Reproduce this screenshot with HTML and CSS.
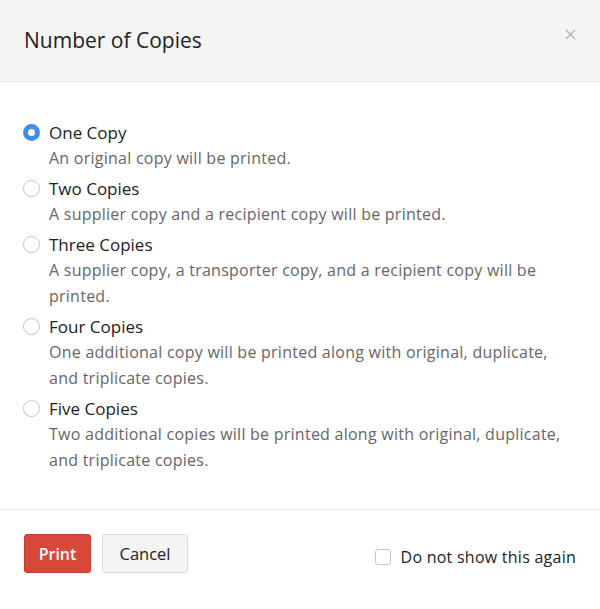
FILE: index.html
```html
<!DOCTYPE html>
<html lang="en">
<head>
<meta charset="utf-8">
<title>Number of Copies</title>
<link rel="stylesheet" href="styles.css">
</head>
<body>
<div class="modal">
  <div class="modal-header">
    <h2 class="modal-title">Number of Copies</h2>
    <button class="close" type="button" aria-label="Close">
      <svg width="11" height="11" viewBox="0 0 11 11"><path d="M1 1L10 10M10 1L1 10" stroke="#b4b4b4" stroke-width="1.4" fill="none"/></svg>
    </button>
  </div>
  <div class="modal-body">
    <label class="option">
      <span class="radio checked"></span>
      <span class="option-text">
        <span class="option-label">One Copy</span>
        <span class="option-desc">An original copy will be printed.</span>
      </span>
    </label>
    <label class="option">
      <span class="radio"></span>
      <span class="option-text">
        <span class="option-label">Two Copies</span>
        <span class="option-desc">A supplier copy and a recipient copy will be printed.</span>
      </span>
    </label>
    <label class="option">
      <span class="radio"></span>
      <span class="option-text">
        <span class="option-label">Three Copies</span>
        <span class="option-desc">A supplier copy, a transporter copy, and a recipient copy will be printed.</span>
      </span>
    </label>
    <label class="option">
      <span class="radio"></span>
      <span class="option-text">
        <span class="option-label">Four Copies</span>
        <span class="option-desc">One additional copy will be printed along with original, duplicate, and triplicate copies.</span>
      </span>
    </label>
    <label class="option">
      <span class="radio"></span>
      <span class="option-text">
        <span class="option-label">Five Copies</span>
        <span class="option-desc">Two additional copies will be printed along with original, duplicate, and triplicate copies.</span>
      </span>
    </label>
  </div>
  <div class="modal-footer">
    <div class="buttons">
      <button class="btn btn-primary" type="button">Print</button>
      <button class="btn btn-default" type="button">Cancel</button>
    </div>
    <label class="check">
      <span class="checkbox"></span>
      <span class="check-label">Do not show this again</span>
    </label>
  </div>
</div>
</body>
</html>
```
FILE: styles.css
```css
* { box-sizing: border-box; }
html, body { margin: 0; padding: 0; background: #fff; }
body {
  font-family: "Open Sans", "Liberation Sans", sans-serif;
  color: #212121;
  width: 600px;
  height: 609px;
  overflow: hidden;
}
.modal { display: flex; flex-direction: column; height: 609px; }
.modal-header {
  height: 82px;
  background: #f4f4f4;
  border-bottom: 1px solid #e6e6e6;
  display: flex;
  align-items: center;
  justify-content: space-between;
  padding: 0 24px 2px 24px;
}
.modal-title {
  margin: 0;
  font-size: 21px;
  font-weight: 400;
  color: #222;
}
.close {
  border: 0;
  background: transparent;
  padding: 0;
  margin-top: -10px;
  width: 11px;
  height: 11px;
  display: flex;
}
.modal-body {
  padding: 39px 34px 0 23px;
  height: 428px;
  border-bottom: 1px solid #e8e8e8;
}
.option {
  display: flex;
  align-items: flex-start;
  gap: 9px;
  margin-bottom: 6px;
}
.radio {
  flex: none;
  width: 17px;
  height: 17px;
  border-radius: 50%;
  border: 1px solid #c4c4c4;
  margin-top: 3px;
  background: #fff;
}
.radio.checked {
  border: 5px solid #408dec;
  background: #fff;
}
.option-text { display: flex; flex-direction: column; }
.option-label {
  font-size: 17px;
  line-height: 24px;
  color: #222;
}
.option-desc {
  font-size: 16px;
  letter-spacing: 0.25px;
  line-height: 26px;
  color: #666;
}
.modal-footer {
  display: flex;
  justify-content: space-between;
  align-items: flex-start;
  padding: 24px 24px 0 24px;
}
.buttons { display: flex; gap: 11px; }
.btn {
  height: 39px;
  font-family: inherit;
  font-size: 16px;
  border-radius: 3px;
  padding: 0;
}
.btn-primary {
  background: #d7473a;
  border: 1px solid #c73a2d;
  color: #fff;
  font-weight: 600;
  width: 67px;
}
.btn-default {
  background: #f4f4f4;
  border: 1px solid #dcdcdc;
  color: #222;
  width: 86px;
  font-size: 16.5px;
}
.check {
  display: flex;
  align-items: center;
  gap: 10px;
  margin-top: 12px;
}
.checkbox {
  width: 16px;
  height: 16px;
  border: 1px solid #c6c6c6;
  border-radius: 3px;
  background: #fff;
}
.check-label { font-size: 16px; letter-spacing: 0.25px; color: #222; }
```
